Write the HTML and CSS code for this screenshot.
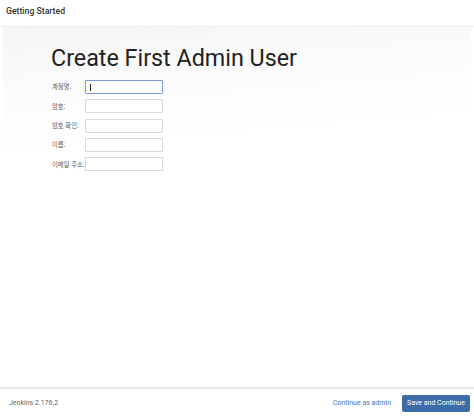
FILE: index.html
```html
<!DOCTYPE html>
<html lang="ko">
<head>
<meta charset="utf-8">
<title>Getting Started</title>
<link rel="stylesheet" href="styles.css">
</head>
<body>
<div class="page">
  <header class="header">Getting Started</header>
  <main class="main">
    <div class="panel">
      <h1 class="title">Create First Admin User</h1>
      <form class="form">
        <label class="row"><span class="label">계정명:</span><span class="field-wrap"><input class="field focused" type="text" value=""><span class="caret"></span></span></label>
        <label class="row"><span class="label">암호:</span><span class="field-wrap"><input class="field" type="password"></span></label>
        <label class="row"><span class="label">암호 확인:</span><span class="field-wrap"><input class="field" type="password"></span></label>
        <label class="row"><span class="label">이름:</span><span class="field-wrap"><input class="field" type="text"></span></label>
        <label class="row"><span class="label">이메일 주소:</span><span class="field-wrap"><input class="field" type="text"></span></label>
      </form>
    </div>
  </main>
  <footer class="footer">
    <span class="version">Jenkins 2.176.2</span>
    <div class="actions">
      <a class="link" href="#">Continue as admin</a>
      <button class="btn" type="button">Save and Continue</button>
    </div>
  </footer>
</div>
</body>
</html>
```
FILE: styles.css
```css
html, body {
  margin: 0;
  padding: 0;
  height: 100%;
  background: #fff;
}
body {
  font-family: Roboto, "Noto Sans CJK KR", sans-serif;
  color: #333;
}
.page {
  display: flex;
  flex-direction: column;
  height: 417px;
}
.header {
  height: 27px;
  box-sizing: border-box;
  padding: 6px 0 0 6px;
  font-size: 8.7px;
  font-weight: 500;
  color: #333;
  border-bottom: 1px solid #ececec;
}
.main {
  flex: 1;
  padding: 0 3px;
}
.panel {
  height: 100%;
  box-sizing: border-box;
  padding: 17px 0 0 48px;
  background: linear-gradient(175deg, #f5f5f5 0, #fbfbfb 60px, #fff 130px);
}
.title {
  margin: 0 0 7px 0;
  font-size: 23.3px;
  line-height: 28.8px;
  font-weight: 400;
  color: #222;
}
.form {
  display: flex;
  flex-direction: column;
  gap: 5px;
}
.row {
  display: flex;
  align-items: center;
  height: 14.3px;
}
.label {
  flex: 0 0 33px;
  min-width: 0;
  box-sizing: border-box;
  padding-left: 1px;
  white-space: nowrap;
  overflow: visible;
  font-size: 6.3px;
  color: #5a5a5a;
  font-family: "Noto Sans CJK KR", sans-serif;
}
.field-wrap {
  position: relative;
  display: flex;
  margin-left: 1px;
}
.field {
  width: 78px;
  height: 14px;
  box-sizing: border-box;
  margin: 0;
  padding: 0 3px;
  border: 1px solid #d9d9d9;
  border-radius: 1px;
  background: #fff;
  font-size: 7px;
  outline: none;
}
.field.focused {
  border: 1.5px solid #7a98e0;
}
.caret {
  position: absolute;
  left: 5px;
  top: 4px;
  width: 1px;
  height: 7px;
  background: #222;
}
.footer {
  height: 30px;
  box-sizing: border-box;
  border-top: 2px solid #e6e6e6;
  display: flex;
  align-items: center;
  justify-content: space-between;
  padding: 0 4px 0 9px;
}
.version {
  font-size: 7px;
  color: #666;
}
.actions {
  display: flex;
  align-items: center;
  gap: 11px;
}
.link {
  font-size: 7px;
  color: #4f73b5;
  text-decoration: none;
}
.btn {
  height: 17px;
  width: 68px;
  padding: 0;
  border: none;
  border-radius: 2px;
  background: #3e6ca8;
  color: #fff;
  font-family: Roboto, sans-serif;
  font-size: 7px;
}
```
